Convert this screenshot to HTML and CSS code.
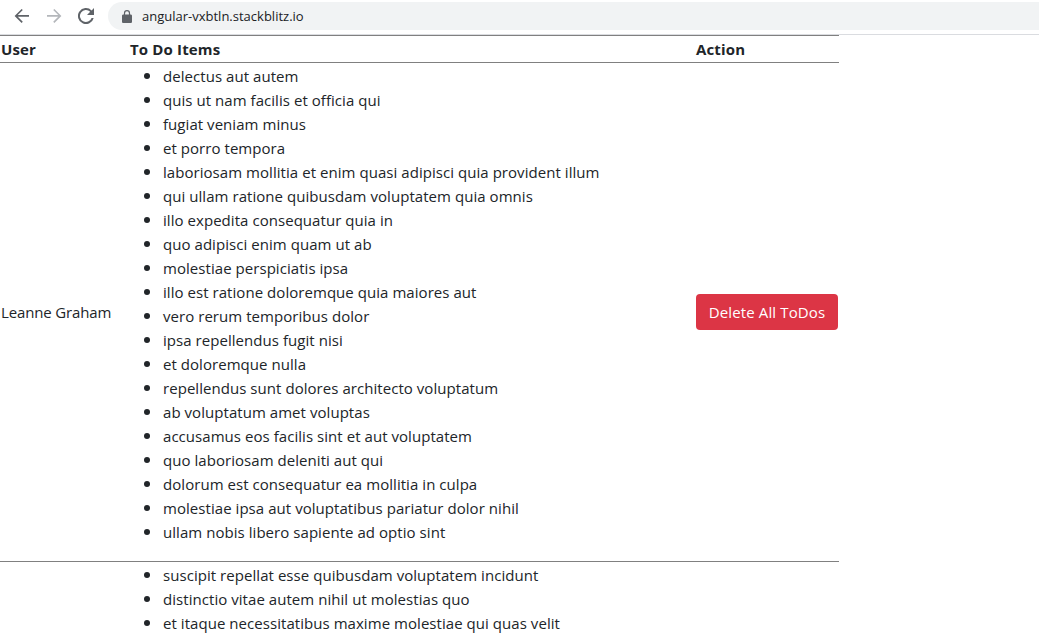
FILE: index.html
```html
<!DOCTYPE html>
<html lang="en">
<head>
<meta charset="utf-8">
<title>angular-vxbtln.stackblitz.io</title>
<link rel="stylesheet" href="styles.css">
</head>
<body>
<header class="toolbar">
  <div class="nav">
    <svg class="icon" viewBox="0 0 16 16"><path d="M15 7H3.8l5-5L7.6.9.6 8l7 7 1.2-1.2-5-5H15z" fill="#5f6368"/></svg>
    <svg class="icon" viewBox="0 0 16 16"><path d="M1 7h11.2l-5-5L8.4.9l7 7.1-7 7-1.2-1.2 5-5H1z" fill="#b4b7bb"/></svg>
    <svg class="icon" viewBox="0 0 16 16"><path d="M13.6 2.4A8 8 0 1 0 15.7 10h-2.1a6 6 0 1 1-1.4-6.2L9 7h7V0z" fill="#5f6368"/></svg>
  </div>
  <div class="omnibox">
    <svg class="lock" viewBox="0 0 10 13"><path d="M8.7 4.4h-.6V3.2a3.1 3.1 0 0 0-6.2 0v1.2h-.6C.6 4.4 0 5 0 5.7v6c0 .7.6 1.3 1.3 1.3h7.4c.7 0 1.3-.6 1.3-1.3v-6c0-.7-.6-1.3-1.3-1.3zM3.1 3.2a1.9 1.9 0 0 1 3.8 0v1.2H3.1z" fill="#5f6368"/></svg>
    <span class="url">angular-vxbtln.stackblitz.io</span>
  </div>
</header>
<table class="todo-table">
  <thead>
    <tr>
      <th class="col-user">User</th>
      <th class="col-items">To Do Items</th>
      <th class="col-action">Action</th>
    </tr>
  </thead>
  <tbody>
    <tr>
      <td class="user-cell">Leanne Graham</td>
      <td>
        <ul class="items">
          <li>delectus aut autem</li>
          <li>quis ut nam facilis et officia qui</li>
          <li>fugiat veniam minus</li>
          <li>et porro tempora</li>
          <li>laboriosam mollitia et enim quasi adipisci quia provident illum</li>
          <li>qui ullam ratione quibusdam voluptatem quia omnis</li>
          <li>illo expedita consequatur quia in</li>
          <li>quo adipisci enim quam ut ab</li>
          <li>molestiae perspiciatis ipsa</li>
          <li>illo est ratione doloremque quia maiores aut</li>
          <li>vero rerum temporibus dolor</li>
          <li>ipsa repellendus fugit nisi</li>
          <li>et doloremque nulla</li>
          <li>repellendus sunt dolores architecto voluptatum</li>
          <li>ab voluptatum amet voluptas</li>
          <li>accusamus eos facilis sint et aut voluptatem</li>
          <li>quo laboriosam deleniti aut qui</li>
          <li>dolorum est consequatur ea mollitia in culpa</li>
          <li>molestiae ipsa aut voluptatibus pariatur dolor nihil</li>
          <li>ullam nobis libero sapiente ad optio sint</li>
        </ul>
      </td>
      <td><button class="btn-danger" type="button">Delete All ToDos</button></td>
    </tr>
    <tr>
      <td></td>
      <td>
        <ul class="items">
          <li>suscipit repellat esse quibusdam voluptatem incidunt</li>
          <li>distinctio vitae autem nihil ut molestias quo</li>
          <li>et itaque necessitatibus maxime molestiae qui quas velit</li>
        </ul>
      </td>
      <td></td>
    </tr>
  </tbody>
</table>
</body>
</html>
```

FILE: styles.css
```css
html, body {
  margin: 0;
  height: 638px;
  overflow: hidden;
  background: #fff;
}
body {
  font-family: "Open Sans", "Noto Sans", sans-serif;
  font-size: 15px;
  line-height: 24px;
  color: #212529;
}
.toolbar {
  height: 34px;
  box-sizing: content-box;
  border-bottom: 1px solid #dadce0;
  display: flex;
  align-items: flex-start;
}
.nav {
  width: 108px;
  height: 32px;
  padding-left: 14px;
  box-sizing: border-box;
  display: flex;
  align-items: center;
  gap: 16px;
}
.icon {
  width: 16px;
  height: 16px;
}
.omnibox {
  flex: 1;
  height: 28px;
  margin-top: 2px;
  background: #f1f3f4;
  border-radius: 14px 0 0 14px;
  display: flex;
  align-items: center;
  padding-left: 14px;
  gap: 10px;
}
.lock {
  width: 10px;
  height: 13px;
}
.url {
  font-size: 13px;
  color: #202124;
}
.todo-table {
  width: 839px;
  table-layout: fixed;
  border-collapse: collapse;
}
.col-user { width: 127px; }
.col-action { width: 142px; }
.todo-table th {
  text-align: left;
  font-weight: 700;
  padding: 1px;
  height: 24px;
  border-top: 1px solid #808080;
  border-bottom: 1px solid #808080;
  letter-spacing: 0.15px;
}
.todo-table td {
  padding: 1px;
  border-bottom: 1px solid #808080;
  vertical-align: middle;
}
.user-cell { letter-spacing: -0.15px; }
.todo-table tbody tr:last-child td { border-bottom: 0; }
.items {
  margin: 0 0 16px;
  padding-left: 33px;
  list-style: none;
  letter-spacing: 0.05px;
}
.items li {
  position: relative;
}
.items li::before {
  content: "";
  position: absolute;
  left: -19px;
  top: 9px;
  width: 6px;
  height: 6px;
  border-radius: 50%;
  background: #212529;
}
.btn-danger {
  display: block;
  width: 142px;
  height: 36px;
  padding: 0;
  border: 0;
  border-radius: 4px;
  background: #dc3545;
  color: #fff;
  font: inherit;
  letter-spacing: 0.12px;
}
```
